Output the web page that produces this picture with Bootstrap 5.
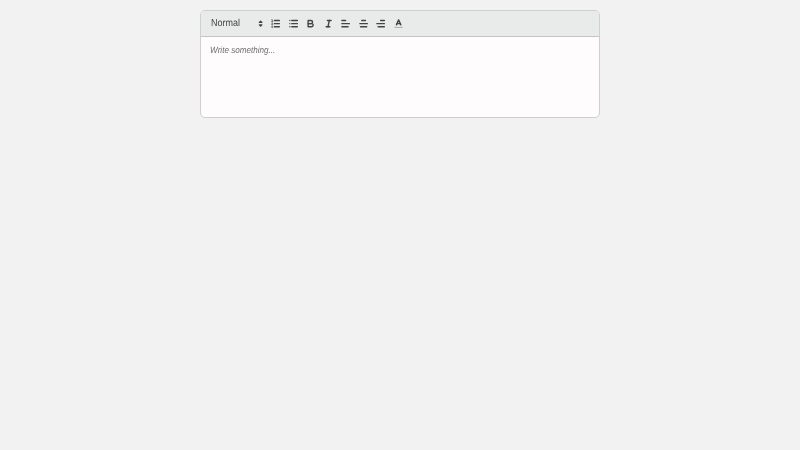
<!DOCTYPE html>
<html lang="en">
<head>
<meta charset="utf-8">
<title>Editor</title>
<link rel="stylesheet" href="https://cdn.jsdelivr.net/npm/bootstrap@5.3.0/dist/css/bootstrap.min.css">
<style>
body{background:#f3f2f2;font-family:"Liberation Sans",Arial,sans-serif;text-rendering:geometricPrecision;}
.ed-box{width:400px;margin-top:10px;height:108px;background:#fffcfd;border:1px solid #cfcfcf;border-radius:5px;overflow:hidden;}
.ed-bar{padding:0 5px;background:#e9ebea;border-bottom:1px solid #c4c4c4;box-sizing:content-box;height:25px;}
.ed-pick{width:61.25px;height:15px;padding:0 .6px 0 5px;color:#444;}
.ed-name{display:inline-block;font-size:9px;transform:scaleY(1.12);transform-origin:center;will-change:transform;}
.ed-btn{width:17.5px;height:15px;padding:0;border:0;background:none;}
.ed-btn svg,.ed-pick svg{width:11.25px;height:11.25px;display:block;}
.ed-s{fill:none;stroke:#444;stroke-width:2.2;stroke-linecap:round;stroke-linejoin:round;}
.ed-t{fill:none;stroke:#444;stroke-width:1;stroke-linecap:round;}
.ed-f{fill:#444;}
.ed-text{padding:7.5px 9.2px;font-size:8.125px;line-height:1.42;font-style:italic;color:#6c6c6c;}
.ed-ph{display:inline-block;transform:scaleY(1.12);transform-origin:center;will-change:transform;}
</style>
</head>
<body>
<div class="ed-box mx-auto d-flex flex-column">
  <div class="ed-bar d-flex align-items-center">
    <div class="ed-pick d-flex align-items-center justify-content-between"><span class="ed-name">Normal</span>
      <svg viewBox="0 0 18 18"><polygon class="ed-s" points="7 11 9 13 11 11 7 11"/><polygon class="ed-s" points="7 7 9 5 11 7 7 7"/></svg></div>
    <button class="ed-btn d-flex align-items-center justify-content-center" type="button" aria-label="Ordered list"><svg viewBox="0 0 18 18"><line class="ed-s" x1="7" x2="15" y1="4" y2="4"/><line class="ed-s" x1="7" x2="15" y1="9" y2="9"/><line class="ed-s" x1="7" x2="15" y1="14" y2="14"/><line class="ed-t" x1="2.5" x2="4.5" y1="5.5" y2="5.5"/><path class="ed-f" d="M3.5,6A0.5,0.5,0,0,1,3,5.5V3.085l-0.276.138A0.5,0.5,0,0,1,2.053,3c-0.124-.247-0.023-0.324.224-0.447l1-.5A0.5,0.5,0,0,1,4,2.5v3A0.5,0.5,0,0,1,3.5,6Z"/><path class="ed-t" d="M4.5,10.5h-2c0-.234,1.85-1.076,1.85-2.234A0.959,0.959,0,0,0,2.5,8.156"/><path class="ed-t" d="M2.5,14.846a0.959,0.959,0,0,0,1.85-.109A0.7,0.7,0,0,0,3.75,14a0.688,0.688,0,0,0,.6-0.736,0.959,0.959,0,0,0-1.85-.109"/></svg></button>
    <button class="ed-btn d-flex align-items-center justify-content-center" type="button" aria-label="Bullet list"><svg viewBox="0 0 18 18"><line class="ed-s" x1="6" x2="15" y1="4" y2="4"/><line class="ed-s" x1="6" x2="15" y1="9" y2="9"/><line class="ed-s" x1="6" x2="15" y1="14" y2="14"/><line class="ed-s" x1="3" x2="3" y1="4" y2="4"/><line class="ed-s" x1="3" x2="3" y1="9" y2="9"/><line class="ed-s" x1="3" x2="3" y1="14" y2="14"/></svg></button>
    <button class="ed-btn d-flex align-items-center justify-content-center" type="button" aria-label="Bold"><svg viewBox="0 0 18 18"><path class="ed-s" d="M5,4H9.5A2.5,2.5,0,0,1,12,6.5v0A2.5,2.5,0,0,1,9.5,9H5A0,0,0,0,1,5,9V4A0,0,0,0,1,5,4Z"/><path class="ed-s" d="M5,9h5.5A2.5,2.5,0,0,1,13,11.5v0A2.5,2.5,0,0,1,10.5,14H5a0,0,0,0,1,0,0V9A0,0,0,0,1,5,9Z"/></svg></button>
    <button class="ed-btn d-flex align-items-center justify-content-center" type="button" aria-label="Italic"><svg viewBox="0 0 18 18"><line class="ed-s" x1="7" x2="13" y1="4" y2="4"/><line class="ed-s" x1="5" x2="11" y1="14" y2="14"/><line class="ed-s" x1="8" x2="10" y1="14" y2="4"/></svg></button>
    <button class="ed-btn d-flex align-items-center justify-content-center" type="button" aria-label="Align left"><svg viewBox="0 0 18 18"><line class="ed-s" x1="3" x2="15" y1="9" y2="9"/><line class="ed-s" x1="3" x2="13" y1="14" y2="14"/><line class="ed-s" x1="3" x2="9" y1="4" y2="4"/></svg></button>
    <button class="ed-btn d-flex align-items-center justify-content-center" type="button" aria-label="Align center"><svg viewBox="0 0 18 18"><line class="ed-s" x1="15" x2="3" y1="9" y2="9"/><line class="ed-s" x1="14" x2="4" y1="14" y2="14"/><line class="ed-s" x1="12" x2="6" y1="4" y2="4"/></svg></button>
    <button class="ed-btn d-flex align-items-center justify-content-center" type="button" aria-label="Align right"><svg viewBox="0 0 18 18"><line class="ed-s" x1="15" x2="3" y1="9" y2="9"/><line class="ed-s" x1="15" x2="5" y1="14" y2="14"/><line class="ed-s" x1="15" x2="9" y1="4" y2="4"/></svg></button>
    <button class="ed-btn d-flex align-items-center justify-content-center" type="button" aria-label="Text colour"><svg viewBox="0 0 18 18"><line class="ed-t" opacity="0.6" x1="3" x2="15" y1="15" y2="15"/><polyline class="ed-s" points="5.5 11 9 3 12.5 11"/><line class="ed-s" x1="11.63" x2="6.38" y1="9" y2="9"/></svg></button>
  </div>
  <div class="ed-text flex-grow-1"><span class="ed-ph">Write something...</span></div>
</div>
<script src="https://cdn.jsdelivr.net/npm/bootstrap@5.3.0/dist/js/bootstrap.bundle.min.js"></script>
</body>
</html>
